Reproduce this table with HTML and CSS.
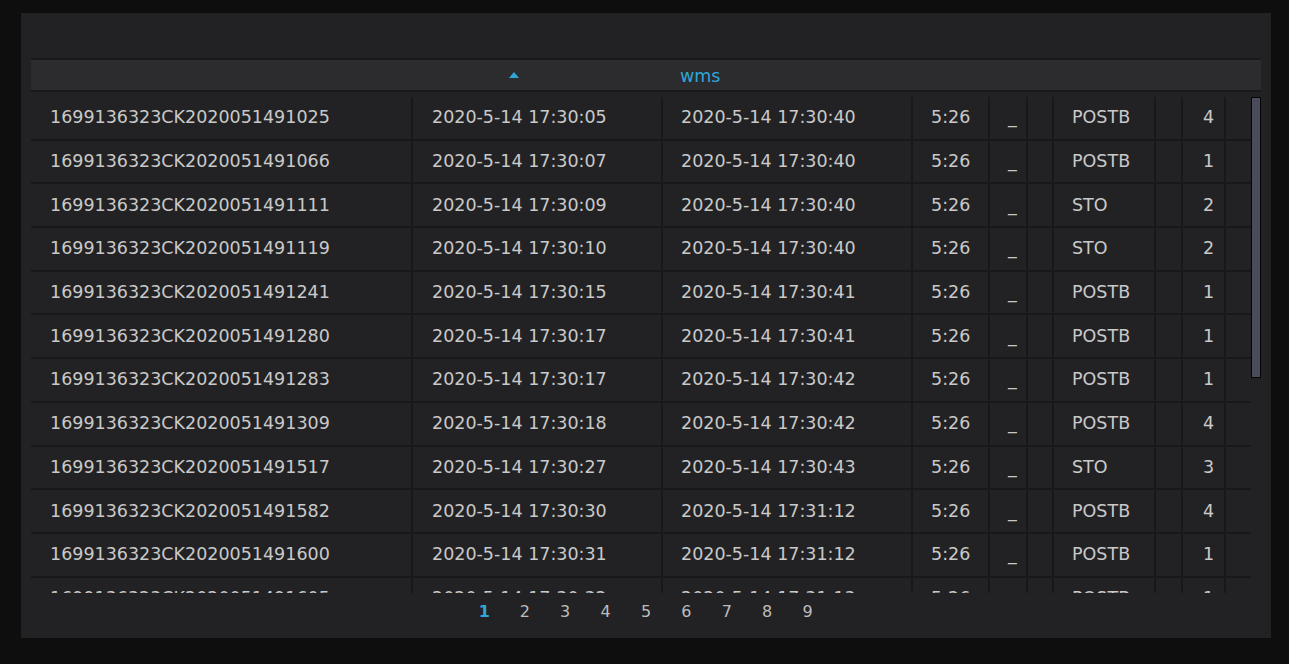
FILE: index.html
```html
<!DOCTYPE html>
<html lang="zh">
<head>
<meta charset="utf-8">
<title>wms</title>
<link rel="stylesheet" href="styles.css">
</head>
<body>
<div class="card">
  <div class="head">
    <span class="sort-up"></span>
    <span class="head-title">wms</span>
  </div>
  <div class="body">
    <div class="rows">
      <div class="row"><div class="c c1">1699136323CK2020051491025</div><div class="c c2">2020-5-14 17:30:05</div><div class="c c3">2020-5-14 17:30:40</div><div class="c c4">5:26</div><div class="c c5">_</div><div class="c c6"></div><div class="c c7">POSTB</div><div class="c c8"></div><div class="c c9">4</div><div class="c c10"></div></div>
      <div class="row"><div class="c c1">1699136323CK2020051491066</div><div class="c c2">2020-5-14 17:30:07</div><div class="c c3">2020-5-14 17:30:40</div><div class="c c4">5:26</div><div class="c c5">_</div><div class="c c6"></div><div class="c c7">POSTB</div><div class="c c8"></div><div class="c c9">1</div><div class="c c10"></div></div>
      <div class="row"><div class="c c1">1699136323CK2020051491111</div><div class="c c2">2020-5-14 17:30:09</div><div class="c c3">2020-5-14 17:30:40</div><div class="c c4">5:26</div><div class="c c5">_</div><div class="c c6"></div><div class="c c7">STO</div><div class="c c8"></div><div class="c c9">2</div><div class="c c10"></div></div>
      <div class="row"><div class="c c1">1699136323CK2020051491119</div><div class="c c2">2020-5-14 17:30:10</div><div class="c c3">2020-5-14 17:30:40</div><div class="c c4">5:26</div><div class="c c5">_</div><div class="c c6"></div><div class="c c7">STO</div><div class="c c8"></div><div class="c c9">2</div><div class="c c10"></div></div>
      <div class="row"><div class="c c1">1699136323CK2020051491241</div><div class="c c2">2020-5-14 17:30:15</div><div class="c c3">2020-5-14 17:30:41</div><div class="c c4">5:26</div><div class="c c5">_</div><div class="c c6"></div><div class="c c7">POSTB</div><div class="c c8"></div><div class="c c9">1</div><div class="c c10"></div></div>
      <div class="row"><div class="c c1">1699136323CK2020051491280</div><div class="c c2">2020-5-14 17:30:17</div><div class="c c3">2020-5-14 17:30:41</div><div class="c c4">5:26</div><div class="c c5">_</div><div class="c c6"></div><div class="c c7">POSTB</div><div class="c c8"></div><div class="c c9">1</div><div class="c c10"></div></div>
      <div class="row"><div class="c c1">1699136323CK2020051491283</div><div class="c c2">2020-5-14 17:30:17</div><div class="c c3">2020-5-14 17:30:42</div><div class="c c4">5:26</div><div class="c c5">_</div><div class="c c6"></div><div class="c c7">POSTB</div><div class="c c8"></div><div class="c c9">1</div><div class="c c10"></div></div>
      <div class="row"><div class="c c1">1699136323CK2020051491309</div><div class="c c2">2020-5-14 17:30:18</div><div class="c c3">2020-5-14 17:30:42</div><div class="c c4">5:26</div><div class="c c5">_</div><div class="c c6"></div><div class="c c7">POSTB</div><div class="c c8"></div><div class="c c9">4</div><div class="c c10"></div></div>
      <div class="row"><div class="c c1">1699136323CK2020051491517</div><div class="c c2">2020-5-14 17:30:27</div><div class="c c3">2020-5-14 17:30:43</div><div class="c c4">5:26</div><div class="c c5">_</div><div class="c c6"></div><div class="c c7">STO</div><div class="c c8"></div><div class="c c9">3</div><div class="c c10"></div></div>
      <div class="row"><div class="c c1">1699136323CK2020051491582</div><div class="c c2">2020-5-14 17:30:30</div><div class="c c3">2020-5-14 17:31:12</div><div class="c c4">5:26</div><div class="c c5">_</div><div class="c c6"></div><div class="c c7">POSTB</div><div class="c c8"></div><div class="c c9">4</div><div class="c c10"></div></div>
      <div class="row"><div class="c c1">1699136323CK2020051491600</div><div class="c c2">2020-5-14 17:30:31</div><div class="c c3">2020-5-14 17:31:12</div><div class="c c4">5:26</div><div class="c c5">_</div><div class="c c6"></div><div class="c c7">POSTB</div><div class="c c8"></div><div class="c c9">1</div><div class="c c10"></div></div>
      <div class="row"><div class="c c1">1699136323CK2020051491605</div><div class="c c2">2020-5-14 17:30:32</div><div class="c c3">2020-5-14 17:31:13</div><div class="c c4">5:26</div><div class="c c5">_</div><div class="c c6"></div><div class="c c7">POSTB</div><div class="c c8"></div><div class="c c9">1</div><div class="c c10"></div></div>
    </div>
    <div class="track"><div class="thumb"></div></div>
  </div>
  <div class="pager">
    <span class="pg active">1</span>
    <span class="pg">2</span>
    <span class="pg">3</span>
    <span class="pg">4</span>
    <span class="pg">5</span>
    <span class="pg">6</span>
    <span class="pg">7</span>
    <span class="pg">8</span>
    <span class="pg">9</span>
  </div>
</div>
</body>
</html>
```

FILE: styles.css
```css
html, body {
  margin: 0;
  padding: 0;
  background: #0e0e0e;
  height: 100%;
}

body {
  font-family: "DejaVu Sans", "Noto Sans CJK SC", sans-serif;
  color: #c9c9c9;
  padding: 13px 18px 0 21px;
  box-sizing: border-box;
}

.card {
  width: 1250px;
  height: 625px;
  background: #222224;
  box-sizing: border-box;
  padding: 45px 10px 0 10px;
  display: flex;
  flex-direction: column;
}

.head {
  height: 30px;
  background: #2c2c2e;
  border-top: 2px solid #19191a;
  border-bottom: 2px solid #19191a;
  display: flex;
  align-items: center;
  font-size: 17.5px;
  color: #2ea6d8;
}

.sort-up {
  width: 0;
  height: 0;
  margin-left: 478px;
  border-left: 5px solid transparent;
  border-right: 5px solid transparent;
  border-bottom: 6px solid #2ea6d8;
}

.head-title {
  margin-left: 161px;
  line-height: 30px;
  padding-top: 1px;
}

.body {
  margin-top: 5px;
  height: 496px;
  display: flex;
  overflow: hidden;
}

.rows {
  width: 1220px;
  overflow: hidden;
}

.row {
  display: flex;
  height: 43.7px;
  box-sizing: border-box;
  border-bottom: 2px solid #18181a;
  font-size: 17.5px;
}

.c {
  box-sizing: border-box;
  border-right: 2px solid #18181a;
  padding-left: 18px;
  display: flex;
  align-items: center;
  white-space: nowrap;
  overflow: hidden;
  padding-bottom: 1px;
}

.c1 { width: 382px; padding-left: 19px; }
.c2 { width: 250px; padding-left: 19px; }
.c3 { width: 250px; }
.c4 { width: 77px; }
.c5 { width: 38px; }
.c6 { width: 26px; }
.c7 { width: 102px; }
.c8 { width: 27px; }
.c9 { width: 43px; padding-left: 20px; }
.c10 { width: 25px; border-right: none; }

.track {
  width: 10px;
}

.thumb {
  width: 10px;
  height: 281px;
  box-sizing: border-box;
  background: #4a4c5b;
  border: 1px solid #050505;
}

.pager {
  display: flex;
  justify-content: center;
  padding-top: 9px;
  font-size: 16px;
  color: #bdbdbd;
}

.pg {
  width: 40.4px;
  text-align: center;
  line-height: 20px;
}

.pg.active {
  color: #2ea6d8;
  font-weight: bold;
}
```
